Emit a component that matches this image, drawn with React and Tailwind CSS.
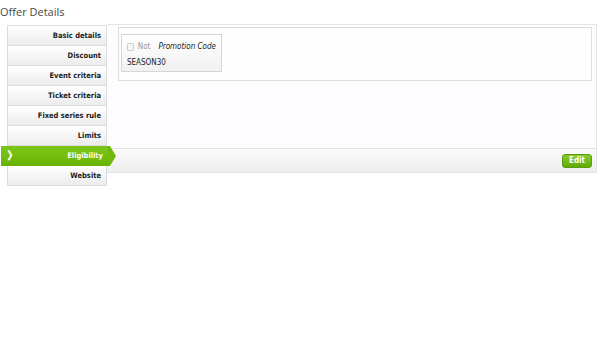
import React from "react";

const items = [
  "Basic details",
  "Discount",
  "Event criteria",
  "Ticket criteria",
  "Fixed series rule",
  "Limits",
  "Eligibility",
  "Website",
];

function NavItem({ label, active }) {
  if (active) {
    return (
      <div className="relative -ml-[7px] h-5 w-[107px] bg-gradient-to-b from-[#7cc61a] to-[#68b300] flex items-center justify-end pr-[5px] text-white">
        <span className="absolute left-[5px] top-[4px] text-[10px] font-bold leading-none">❯</span>
        {label}
        <svg className="absolute -right-[8px] top-0" width="8" height="20" viewBox="0 0 8 20">
          <polygon points="0,0 2,0 8,10 2,20 0,20" fill="#70b90b" />
        </svg>
      </div>
    );
  }
  return (
    <div className="h-5 border-b border-[#dcdcdc] bg-gradient-to-b from-white to-[#ececec] flex items-center justify-end pr-[5px] text-[#222]">
      {label}
    </div>
  );
}

export default function App() {
  return (
    <div className="w-[600px] h-[353px] bg-white font-['DejaVu_Sans_Condensed','Liberation_Sans',sans-serif]">
      <div className="h-[25px] pb-[1px] flex items-center text-[11px] text-[#4a4a4a] font-['Open_Sans',sans-serif]">
        Offer Details
      </div>
      <div className="flex items-start">
        <div className="ml-[7px] w-[100px] border-l border-r border-t border-[#dcdcdc] text-[7.5px] font-bold relative z-10 whitespace-nowrap">
          {items.map((l) => (
            <NavItem key={l} label={l} active={l === "Eligibility"} />
          ))}
        </div>
        <div className="flex-1 -mt-[1px] mr-[3px] h-[149px] border border-[#e4e4e4] border-l-0 bg-[#fdfcff] flex flex-col">
          <div className="ml-[11px] mr-[4px] mt-[2px] h-[54px] border border-[#dedede] bg-[#fefeff] pl-[2px] pt-[6px]">
            <div className="w-[101px] h-[38px] border border-[#d6d6d6] bg-gradient-to-b from-white to-[#f1f1f1] px-[5px] pt-[7px] text-[8px] text-[#222] whitespace-nowrap">
              <div className="flex items-center h-[10px]">
                <span className="w-[8px] h-[8px] border border-[#cfcfcf] bg-[#f6f6f6] rounded-[1px]" />
                <span className="ml-[4px] text-[#999]">Not</span>
                <span className="ml-[8px] italic">Promotion Code</span>
              </div>
              <div className="mt-[5px]">SEASON30</div>
            </div>
          </div>
          <div className="flex-1" />
          <div className="h-[24px] border-t border-[#e2e2e2] bg-gradient-to-b from-[#fafafa] to-[#eeeeee] flex items-center justify-end pr-[4px]">
            <div className="w-[30px] h-[14px] rounded-[3px] border border-[#5a9e0a] bg-gradient-to-b from-[#86cc2a] to-[#5eab05] text-white text-[8px] font-bold flex items-center justify-center">
              Edit
            </div>
          </div>
        </div>
      </div>
    </div>
  );
}
